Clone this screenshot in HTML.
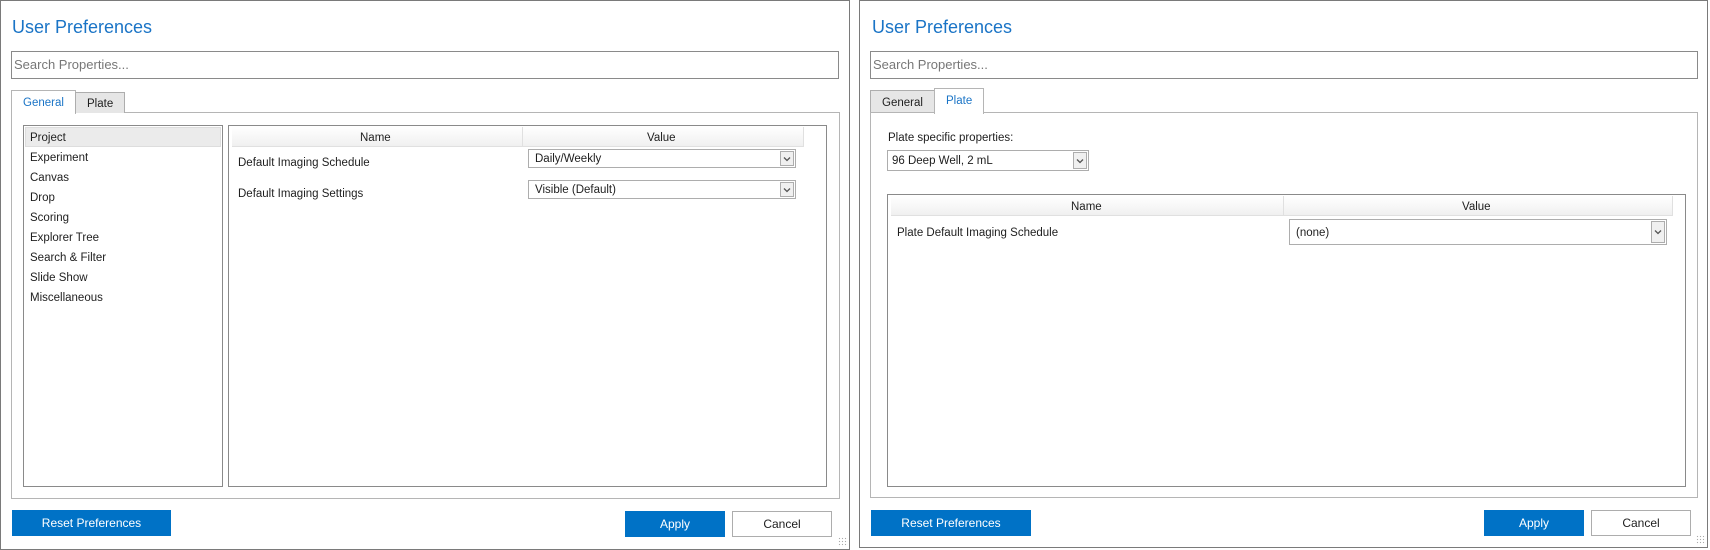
<!DOCTYPE html>
<html><head><meta charset="utf-8"><style>
*{box-sizing:border-box;margin:0;padding:0}
body{width:1710px;height:550px;background:#fff;position:relative;overflow:hidden;font-family:"Liberation Sans",sans-serif;font-size:11.5px;color:#1e1e1e}
.a{position:absolute}
.win{border:1px solid #7a7a7a}
.title{font-size:18px;color:#1a74c6}
.box{border:1px solid #8a8a8a;background:#fff}
.lbox{border:1px solid #adadad}
.t{position:absolute;white-space:nowrap;line-height:14px}
.btn{background:#0072c6;color:#fff;text-align:center;line-height:26px;font-size:12px}
.cbtn{border:1px solid #adadad;background:#fff;text-align:center;line-height:24px;font-size:12px}
.combo{border:1px solid #adadad;background:#fff}
.dd{position:absolute;right:1px;top:1px;bottom:1px;width:14px;background:#f0f0f0;border:1px solid #adadad;display:flex;align-items:center;justify-content:center}
.hdr{background:linear-gradient(#fff,#f0f0f0)}
.grip{background-image:radial-gradient(#aaa 0.7px,transparent 0.8px);background-size:3px 3px}
</style></head><body>
<svg width="0" height="0" style="position:absolute"><defs><symbol id="chev" viewBox="0 0 8 6"><path d="M1 1.5L4 4.5L7 1.5" fill="none" stroke="#555" stroke-width="1.3"/></symbol></defs></svg>

<!-- LEFT WINDOW -->
<div class="a win" style="left:0;top:0;width:850px;height:550px"></div>
<div class="a t title" style="top:17px;left:12px;line-height:20px">User Preferences</div>
<div class="a box" style="left:11px;top:51px;width:828px;height:28px"></div>
<div class="t" style="left:14px;top:58px;color:#777;font-size:13px">Search Properties...</div>
<div class="a lbox" style="left:11px;top:112px;width:829px;height:387px;border-color:#b5b5b5"></div>
<div class="a" style="left:11px;top:90px;width:65px;height:24px;background:#fff;border:1px solid #b5b5b5;border-bottom:none"></div>
<div class="t" style="left:23px;top:96px;color:#1a74c6">General</div>
<div class="a" style="left:75px;top:92px;width:50px;height:21px;background:#e6e6e6;border:1px solid #adadad;border-bottom:none"></div>
<div class="t" style="left:87px;top:97px">Plate</div>
<div class="a box" style="left:23px;top:125px;width:200px;height:362px"></div>
<div class="a" style="left:25px;top:127px;width:196px;height:20px;background:#ebebeb;border:1px solid #ddd"></div>
<div class="t" style="left:30px;top:131px">Project</div>
<div class="t" style="left:30px;top:151px">Experiment</div>
<div class="t" style="left:30px;top:171px">Canvas</div>
<div class="t" style="left:30px;top:191px">Drop</div>
<div class="t" style="left:30px;top:211px">Scoring</div>
<div class="t" style="left:30px;top:231px">Explorer Tree</div>
<div class="t" style="left:30px;top:251px">Search &amp; Filter</div>
<div class="t" style="left:30px;top:271px">Slide Show</div>
<div class="t" style="left:30px;top:291px">Miscellaneous</div>
<div class="a box" style="left:228px;top:125px;width:599px;height:362px"></div>
<div class="a hdr" style="left:232px;top:127px;width:572px;height:20px;border-bottom:1px solid #e0e0e0"></div>
<div class="a" style="left:522px;top:127px;width:1px;height:20px;background:#e0e0e0"></div>
<div class="a" style="left:803px;top:127px;width:1px;height:20px;background:#e0e0e0"></div>
<div class="t" style="left:360px;top:131px">Name</div>
<div class="t" style="left:647px;top:131px">Value</div>
<div class="t" style="left:238px;top:156px">Default Imaging Schedule</div>
<div class="a combo" style="left:528px;top:149px;width:268px;height:19px"><div class="dd"><svg width="8" height="6"><use href="#chev"/></svg></div></div>
<div class="t" style="left:535px;top:152px">Daily/Weekly</div>
<div class="t" style="left:238px;top:187px">Default Imaging Settings</div>
<div class="a combo" style="left:528px;top:180px;width:268px;height:19px"><div class="dd"><svg width="8" height="6"><use href="#chev"/></svg></div></div>
<div class="t" style="left:535px;top:183px">Visible (Default)</div>
<div class="a btn" style="left:12px;top:510px;width:159px;height:26px">Reset Preferences</div>
<div class="a btn" style="left:625px;top:511px;width:100px;height:26px">Apply</div>
<div class="a cbtn" style="left:732px;top:511px;width:100px;height:26px">Cancel</div>
<div class="a grip" style="left:838px;top:537px;width:10px;height:10px"></div>

<!-- RIGHT WINDOW -->
<div class="a win" style="left:859px;top:0;width:849px;height:548px"></div>
<div class="a t title" style="left:872px;top:17px;line-height:20px">User Preferences</div>
<div class="a box" style="left:870px;top:51px;width:828px;height:28px"></div>
<div class="t" style="left:873px;top:58px;color:#777;font-size:13px">Search Properties...</div>
<div class="a lbox" style="left:870px;top:112px;width:828px;height:386px;border-color:#b5b5b5"></div>
<div class="a" style="left:870px;top:90px;width:65px;height:22px;background:#e6e6e6;border:1px solid #adadad;border-bottom:none"></div>
<div class="t" style="left:882px;top:96px">General</div>
<div class="a" style="left:934px;top:88px;width:50px;height:26px;background:#fff;border:1px solid #b5b5b5;border-bottom:none"></div>
<div class="t" style="left:946px;top:94px;color:#1a74c6">Plate</div>
<div class="t" style="left:888px;top:131px">Plate specific properties:</div>
<div class="a combo" style="left:887px;top:150px;width:202px;height:21px"><div class="dd"><svg width="8" height="6"><use href="#chev"/></svg></div></div>
<div class="t" style="left:892px;top:154px">96 Deep Well, 2 mL</div>
<div class="a box" style="left:887px;top:194px;width:799px;height:293px"></div>
<div class="a hdr" style="left:891px;top:196px;width:782px;height:20px;border-bottom:1px solid #e0e0e0"></div>
<div class="a" style="left:1283px;top:196px;width:1px;height:20px;background:#e0e0e0"></div>
<div class="a" style="left:1672px;top:196px;width:1px;height:20px;background:#e0e0e0"></div>
<div class="t" style="left:1071px;top:200px">Name</div>
<div class="t" style="left:1462px;top:200px">Value</div>
<div class="t" style="left:897px;top:226px">Plate Default Imaging Schedule</div>
<div class="a combo" style="left:1289px;top:219px;width:378px;height:26px"><div class="dd"><svg width="8" height="6"><use href="#chev"/></svg></div></div>
<div class="t" style="left:1296px;top:226px">(none)</div>
<div class="a btn" style="left:871px;top:510px;width:160px;height:26px">Reset Preferences</div>
<div class="a btn" style="left:1484px;top:510px;width:100px;height:26px">Apply</div>
<div class="a cbtn" style="left:1591px;top:510px;width:100px;height:26px">Cancel</div>
<div class="a grip" style="left:1696px;top:535px;width:10px;height:10px"></div>
</body></html>
